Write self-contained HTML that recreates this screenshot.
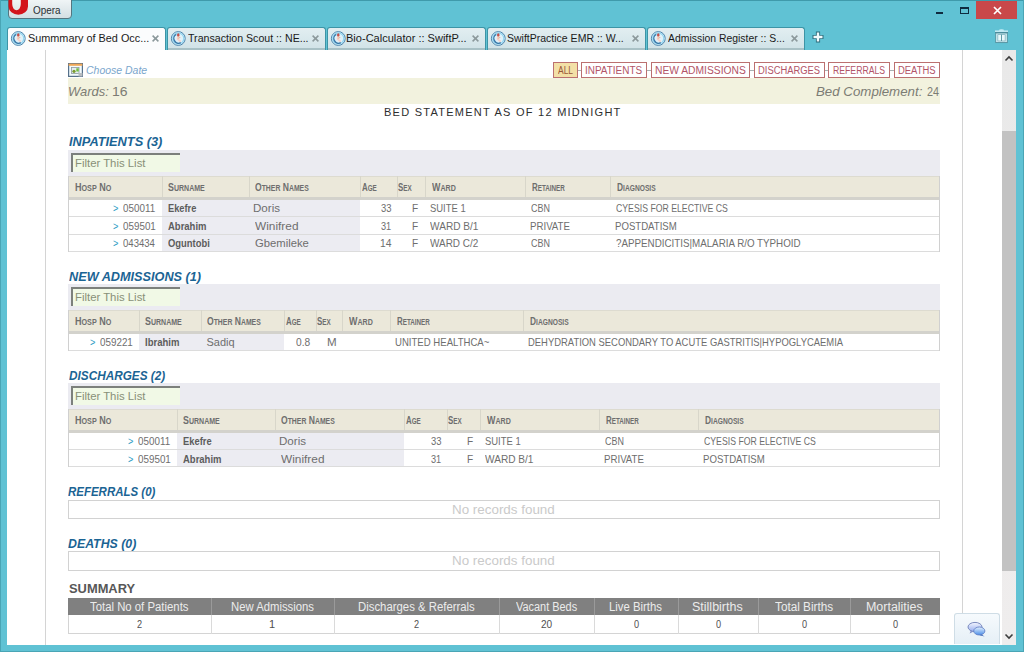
<!DOCTYPE html>
<html><head><meta charset="utf-8"><style>
*{margin:0;padding:0;box-sizing:border-box}
html,body{width:1024px;height:652px;overflow:hidden}
body{background:#60c2d4;font-family:"Liberation Sans",sans-serif;position:relative}
div,span,svg{position:absolute}
.t{white-space:nowrap;line-height:1;transform-origin:0 0}
.tab{top:27px;height:23px;background:linear-gradient(#e2eef1,#d0e2e7);border:1px solid #3d94a6;border-bottom:none;border-radius:3px 3px 0 0}
.tab.active{background:#fbfcfd;height:24px}
.t small{font-size:80%}
.tab .x{right:6px;top:4px;color:#98a6aa;font-size:13px;line-height:1}
</style></head><body>
<div style="left:0px;top:0px;width:1024px;height:1px;background:#3f9aab"></div>
<div style="left:8px;top:-3px;width:64px;height:22px;border:1px solid #55757f;border-radius:0 0 4px 4px;background:linear-gradient(#f3f7f8,#d3dfe3)"></div>
<svg style="left:8px;top:0" width="21" height="16" viewBox="0 0 21 16"><path fill-rule="evenodd" d="M0.6 0V6.5A9.7 8.2 0 0 0 20 6.5V0Z M4.2 0V4A4.3 6.2 0 0 0 12.8 4V0Z" fill="#d3141b"/></svg>
<span class="t" style="left:33.00px;top:5px;font-size:11px;color:#2a2f33;transform:scaleX(0.9032);">Opera</span>
<div style="left:936px;top:12px;width:7px;height:2px;background:#0f2b3f"></div>
<div style="left:960px;top:7px;width:9px;height:7px;border:1px solid #0f2b3f;border-top-width:2px"></div>
<div style="left:976px;top:1px;width:41px;height:18px;background:#c9484a"></div>
<svg style="left:993px;top:6px" width="9" height="9" viewBox="0 0 9 9"><path d="M1 1L8 8M8 1L1 8" stroke="#fff" stroke-width="1.7"/></svg>
<div class="tab active" style="left:7px;width:159px"><svg style="left:2px;top:2px" width="16" height="16" viewBox="0 0 16 16"><circle cx="8.3" cy="8.5" r="6.9" fill="#dff1f9" stroke="#4a84ad" stroke-width="1"/><circle cx="8.3" cy="8.5" r="5.5" fill="none" stroke="#94d6f0" stroke-width="1.3"/><path d="M6.3 4.3A4.3 4.3 0 0 0 10.8 12.6" stroke="#3a78a8" stroke-width="1.4" fill="none"/><path d="M8.2 6L7.6 9L10.6 11.6" stroke="#f6d0c8" stroke-width="1.8" fill="none"/><path d="M7.9 8.6L10.2 7.2" stroke="#f0b898" stroke-width="1.2"/><ellipse cx="8.3" cy="4.9" rx="1.3" ry="1.7" fill="#c25048"/></svg><svg style="right:6px;top:7px" width="7" height="7" viewBox="0 0 7 7"><path d="M0.6 0.6L6.4 6.4M6.4 0.6L0.6 6.4" stroke="#8b989b" stroke-width="1.5"/></svg></div>
<span class="t" style="left:28.10px;top:33px;font-size:11.5px;color:#1a1a1a;transform:scaleX(0.9437);">Summmary of Bed Occ...</span>
<div class="tab" style="left:167px;width:159px"><svg style="left:2px;top:2px" width="16" height="16" viewBox="0 0 16 16"><circle cx="8.3" cy="8.5" r="6.9" fill="#dff1f9" stroke="#4a84ad" stroke-width="1"/><circle cx="8.3" cy="8.5" r="5.5" fill="none" stroke="#94d6f0" stroke-width="1.3"/><path d="M6.3 4.3A4.3 4.3 0 0 0 10.8 12.6" stroke="#3a78a8" stroke-width="1.4" fill="none"/><path d="M8.2 6L7.6 9L10.6 11.6" stroke="#f6d0c8" stroke-width="1.8" fill="none"/><path d="M7.9 8.6L10.2 7.2" stroke="#f0b898" stroke-width="1.2"/><ellipse cx="8.3" cy="4.9" rx="1.3" ry="1.7" fill="#c25048"/></svg><svg style="right:6px;top:7px" width="7" height="7" viewBox="0 0 7 7"><path d="M0.6 0.6L6.4 6.4M6.4 0.6L0.6 6.4" stroke="#8b989b" stroke-width="1.5"/></svg></div>
<div style="left:168px;top:48px;width:157px;height:2px;background:#a9c1c6"></div>
<span class="t" style="left:187.70px;top:33px;font-size:11.5px;color:#1a1a1a;transform:scaleX(0.9231);">Transaction Scout :: NE...</span>
<div class="tab" style="left:327px;width:159px"><svg style="left:2px;top:2px" width="16" height="16" viewBox="0 0 16 16"><circle cx="8.3" cy="8.5" r="6.9" fill="#dff1f9" stroke="#4a84ad" stroke-width="1"/><circle cx="8.3" cy="8.5" r="5.5" fill="none" stroke="#94d6f0" stroke-width="1.3"/><path d="M6.3 4.3A4.3 4.3 0 0 0 10.8 12.6" stroke="#3a78a8" stroke-width="1.4" fill="none"/><path d="M8.2 6L7.6 9L10.6 11.6" stroke="#f6d0c8" stroke-width="1.8" fill="none"/><path d="M7.9 8.6L10.2 7.2" stroke="#f0b898" stroke-width="1.2"/><ellipse cx="8.3" cy="4.9" rx="1.3" ry="1.7" fill="#c25048"/></svg><svg style="right:6px;top:7px" width="7" height="7" viewBox="0 0 7 7"><path d="M0.6 0.6L6.4 6.4M6.4 0.6L0.6 6.4" stroke="#8b989b" stroke-width="1.5"/></svg></div>
<div style="left:328px;top:48px;width:157px;height:2px;background:#a9c1c6"></div>
<span class="t" style="left:346.14px;top:33px;font-size:11.5px;color:#1a1a1a;transform:scaleX(0.9597);">Bio-Calculator :: SwiftP...</span>
<div class="tab" style="left:487px;width:159px"><svg style="left:2px;top:2px" width="16" height="16" viewBox="0 0 16 16"><circle cx="8.3" cy="8.5" r="6.9" fill="#dff1f9" stroke="#4a84ad" stroke-width="1"/><circle cx="8.3" cy="8.5" r="5.5" fill="none" stroke="#94d6f0" stroke-width="1.3"/><path d="M6.3 4.3A4.3 4.3 0 0 0 10.8 12.6" stroke="#3a78a8" stroke-width="1.4" fill="none"/><path d="M8.2 6L7.6 9L10.6 11.6" stroke="#f6d0c8" stroke-width="1.8" fill="none"/><path d="M7.9 8.6L10.2 7.2" stroke="#f0b898" stroke-width="1.2"/><ellipse cx="8.3" cy="4.9" rx="1.3" ry="1.7" fill="#c25048"/></svg><svg style="right:6px;top:7px" width="7" height="7" viewBox="0 0 7 7"><path d="M0.6 0.6L6.4 6.4M6.4 0.6L0.6 6.4" stroke="#8b989b" stroke-width="1.5"/></svg></div>
<div style="left:488px;top:48px;width:157px;height:2px;background:#a9c1c6"></div>
<span class="t" style="left:507.00px;top:33px;font-size:11.5px;color:#1a1a1a;transform:scaleX(0.9134);">SwiftPractice EMR :: W...</span>
<div class="tab" style="left:647px;width:158px"><svg style="left:2px;top:2px" width="16" height="16" viewBox="0 0 16 16"><circle cx="8.3" cy="8.5" r="6.9" fill="#dff1f9" stroke="#4a84ad" stroke-width="1"/><circle cx="8.3" cy="8.5" r="5.5" fill="none" stroke="#94d6f0" stroke-width="1.3"/><path d="M6.3 4.3A4.3 4.3 0 0 0 10.8 12.6" stroke="#3a78a8" stroke-width="1.4" fill="none"/><path d="M8.2 6L7.6 9L10.6 11.6" stroke="#f6d0c8" stroke-width="1.8" fill="none"/><path d="M7.9 8.6L10.2 7.2" stroke="#f0b898" stroke-width="1.2"/><ellipse cx="8.3" cy="4.9" rx="1.3" ry="1.7" fill="#c25048"/></svg><svg style="right:6px;top:7px" width="7" height="7" viewBox="0 0 7 7"><path d="M0.6 0.6L6.4 6.4M6.4 0.6L0.6 6.4" stroke="#8b989b" stroke-width="1.5"/></svg></div>
<div style="left:648px;top:48px;width:156px;height:2px;background:#a9c1c6"></div>
<span class="t" style="left:667.70px;top:33px;font-size:11.5px;color:#1a1a1a;transform:scaleX(0.9054);">Admission Register :: S...</span>
<svg style="left:812px;top:31px" width="12" height="12" viewBox="0 0 12 12"><path d="M6 0.5V11.5M0.5 6H11.5" stroke="#2b6c7c" stroke-width="4.2"/><path d="M6 1.5V10.5M1.5 6H10.5" stroke="#f1fafc" stroke-width="2.4"/></svg>
<svg style="left:994px;top:28px" width="15" height="16" viewBox="0 0 15 16"><ellipse cx="7.5" cy="2.3" rx="2.6" ry="1.1" fill="#c6ecf4"/><rect x="1" y="2.4" width="13" height="2.4" fill="#bfe8f2"/><path d="M1 4.6H14" stroke="#3f8494" stroke-width="1"/><rect x="1.7" y="5" width="11.6" height="9.6" fill="#d6f0f6" stroke="#4f8e9c" stroke-width="0.9"/><rect x="3.8" y="6.6" width="7.4" height="6.4" fill="#e9f8fb" stroke="#7fb2be" stroke-width="0.8"/><path d="M7.5 6.6V13" stroke="#4f8e9c" stroke-width="0.9"/></svg>
<div style="left:7px;top:50px;width:1009px;height:595px;background:#fff"></div>
<div style="left:0px;top:651px;width:1024px;height:1px;background:#4aa5b5"></div>
<div style="left:0px;top:0px;width:1px;height:652px;background:#4aa5b5"></div>
<div style="left:1023px;top:0px;width:1px;height:652px;background:#4aa5b5"></div>
<div style="left:45px;top:50px;width:1px;height:595px;background:#d4d4d4"></div>
<div style="left:962px;top:50px;width:1px;height:563px;background:#d4d4d4"></div>
<div style="left:1002px;top:50px;width:14px;height:595px;background:linear-gradient(#e9e9e9,#efeded)"></div>
<div style="left:1002px;top:131px;width:14px;height:440px;background:#c2c2c2"></div>
<svg style="left:1004px;top:55px" width="10" height="7" viewBox="0 0 10 7"><path d="M1.5 5.5L5 2L8.5 5.5" stroke="#3c3c3c" stroke-width="1.6" fill="none"/></svg>
<svg style="left:1004px;top:633px" width="10" height="7" viewBox="0 0 10 7"><path d="M1.5 1.5L5 5L8.5 1.5" stroke="#3c3c3c" stroke-width="1.6" fill="none"/></svg>
<div style="left:954px;top:613px;width:46px;height:31px;border:1px solid #cfdde6;border-bottom:none;border-radius:3px 3px 0 0;background:linear-gradient(#f6fafd,#e5eff6)"></div>
<svg style="left:967px;top:621px" width="20" height="17" viewBox="0 0 20 17"><defs><linearGradient id="cb1" x1="0" y1="0" x2="0" y2="1"><stop offset="0" stop-color="#f4f6fe"/><stop offset="1" stop-color="#98aef0"/></linearGradient><linearGradient id="cb2" x1="0" y1="0" x2="0" y2="1"><stop offset="0" stop-color="#e6f2fe"/><stop offset="1" stop-color="#4c8ee8"/></linearGradient></defs><ellipse cx="8" cy="6" rx="7" ry="4.6" fill="url(#cb1)" stroke="#6e7fb8" stroke-width="0.9"/><path d="M3.8 9.5L2.6 12.6L6.6 10.4Z" fill="#8090c8"/><ellipse cx="12.3" cy="10" rx="5.6" ry="4" fill="url(#cb2)" stroke="#5a78c0" stroke-width="0.8"/><path d="M14.5 13.4L17.6 15.4L12.6 14.2Z" fill="#3a66b8"/></svg>
<svg style="left:68px;top:63px" width="15" height="14" viewBox="0 0 15 14"><rect x="0.6" y="0.6" width="13.8" height="12.8" fill="#f2fafc" stroke="#56708a" stroke-width="1.2"/><rect x="0.6" y="0.6" width="13.8" height="2.2" fill="#f0a858"/><rect x="3.5" y="4.5" width="7.5" height="6" fill="#e6eef0" stroke="#8a98a0" stroke-width="0.8"/><circle cx="6" cy="8.3" r="1.6" fill="#7a9a30"/><rect x="8.3" y="5.3" width="2.4" height="3.2" fill="#70c040"/><rect x="10.5" y="10" width="4" height="3.5" fill="#b8bcc0"/></svg>
<span class="t" style="left:86.00px;top:65px;font-size:11px;color:#7aa6cc;font-style:italic;transform:scaleX(0.9531);">Choose Date</span>
<div style="left:553px;top:62px;width:25px;height:16px;border:1px solid #bb7070;background:#f3e0a6"></div>
<span class="t" style="left:557.90px;top:66px;font-size:10px;color:#9a5838;transform:scaleX(0.8444);">ALL</span>
<div style="left:581px;top:62px;width:66px;height:16px;border:1px solid #bb7070;background:#fff"></div>
<span class="t" style="left:585.16px;top:66px;font-size:10px;color:#b25468;transform:scaleX(0.9946);">INPATIENTS</span>
<div style="left:578px;top:70px;width:3px;height:1px;background:#a9b2b2"></div>
<div style="left:651px;top:62px;width:99px;height:16px;border:1px solid #bb7070;background:#fff"></div>
<span class="t" style="left:654.77px;top:66px;font-size:10px;color:#b25468;transform:scaleX(1.0276);">NEW ADMISSIONS</span>
<div style="left:647px;top:70px;width:4px;height:1px;background:#a9b2b2"></div>
<div style="left:754px;top:62px;width:71px;height:16px;border:1px solid #bb7070;background:#fff"></div>
<span class="t" style="left:758.06px;top:66px;font-size:10px;color:#b25468;transform:scaleX(0.9385);">DISCHARGES</span>
<div style="left:750px;top:70px;width:4px;height:1px;background:#a9b2b2"></div>
<div style="left:828px;top:62px;width:62px;height:16px;border:1px solid #bb7070;background:#fff"></div>
<span class="t" style="left:832.53px;top:66px;font-size:10px;color:#b25468;transform:scaleX(0.8678);">REFERRALS</span>
<div style="left:825px;top:70px;width:3px;height:1px;background:#a9b2b2"></div>
<div style="left:894px;top:62px;width:46px;height:16px;border:1px solid #bb7070;background:#fff"></div>
<span class="t" style="left:897.66px;top:66px;font-size:10px;color:#b25468;transform:scaleX(0.9436);">DEATHS</span>
<div style="left:890px;top:70px;width:4px;height:1px;background:#a9b2b2"></div>
<div style="left:68px;top:78px;width:872px;height:26px;background:#f2f2de"></div>
<span class="t" style="left:67.91px;top:85px;font-size:13px;color:#7c7c74;font-style:italic;transform:scaleX(0.9950);">Wards:</span>
<span class="t" style="left:112.32px;top:85px;font-size:13px;color:#7c7c74;transform:scaleX(1.0769);">16</span>
<span class="t" style="left:816.00px;top:85px;font-size:13px;color:#7c7c74;font-style:italic;transform:scaleX(1.0221);">Bed Complement:</span>
<span class="t" style="left:926.70px;top:85px;font-size:13px;color:#7c7c74;transform:scaleX(0.8333);">24</span>
<span class="t" style="left:384.34px;top:107px;font-size:11.5px;color:#2e2e2e;transform:scaleX(0.9581);letter-spacing:1.3px">BED STATEMENT AS OF 12 MIDNIGHT</span>
<span class="t" style="left:68.50px;top:135px;font-size:13px;color:#1b6494;font-weight:bold;font-style:italic;transform:scaleX(0.9842);">INPATIENTS (3)</span>
<div style="left:68px;top:150px;width:872px;height:26px;background:#ebebf1"></div>
<div style="left:71px;top:153px;width:109px;height:19px;background:#f1f9e6;border-top:2px solid #7c807c;border-left:2px solid #7c807c"></div>
<span class="t" style="left:74.67px;top:158px;font-size:11px;color:#889078;transform:scaleX(1.0324);">Filter This List</span>
<div style="left:68px;top:176px;width:872px;height:21px;background:#ebe8da;border-top:1px solid #dddbd0"></div>
<div style="left:68px;top:197px;width:872px;height:3px;background:#d3d2cc"></div>
<div style="left:162px;top:200px;width:198px;height:51px;background:#ececf2"></div>
<div style="left:68px;top:216px;width:872px;height:1px;background:#dcdcdc"></div>
<div style="left:68px;top:234px;width:872px;height:1px;background:#dcdcdc"></div>
<div style="left:68px;top:251px;width:872px;height:1px;background:#dcdcdc"></div>
<div style="left:68px;top:176px;width:1px;height:76px;background:#d0d0d0"></div>
<div style="left:939px;top:176px;width:1px;height:76px;background:#d0d0d0"></div>
<div style="left:162px;top:176px;width:1px;height:21px;background:#d8d6ca"></div>
<div style="left:249px;top:176px;width:1px;height:21px;background:#d8d6ca"></div>
<div style="left:360px;top:176px;width:1px;height:21px;background:#d8d6ca"></div>
<div style="left:397px;top:176px;width:1px;height:21px;background:#d8d6ca"></div>
<div style="left:425px;top:176px;width:1px;height:21px;background:#d8d6ca"></div>
<div style="left:525px;top:176px;width:1px;height:21px;background:#d8d6ca"></div>
<div style="left:610px;top:176px;width:1px;height:21px;background:#d8d6ca"></div>
<span class="t" style="left:74.70px;top:182px;font-size:10.5px;color:#6e6e6e;font-weight:bold;transform:scaleX(0.8571);">H<small>OSP</small> N<small>O</small></span>
<span class="t" style="left:168.30px;top:182px;font-size:10.5px;color:#6e6e6e;font-weight:bold;transform:scaleX(0.8409);">S<small>URNAME</small></span>
<span class="t" style="left:255.30px;top:182px;font-size:10.5px;color:#6e6e6e;font-weight:bold;transform:scaleX(0.8182);">O<small>THER</small> N<small>AMES</small></span>
<span class="t" style="left:361.60px;top:182px;font-size:10.5px;color:#6e6e6e;font-weight:bold;transform:scaleX(0.7500);">A<small>GE</small></span>
<span class="t" style="left:398.20px;top:182px;font-size:10.5px;color:#6e6e6e;font-weight:bold;transform:scaleX(0.7500);">S<small>EX</small></span>
<span class="t" style="left:432.00px;top:182px;font-size:10.5px;color:#6e6e6e;font-weight:bold;transform:scaleX(0.8464);">W<small>ARD</small></span>
<span class="t" style="left:532.00px;top:182px;font-size:10.5px;color:#6e6e6e;font-weight:bold;transform:scaleX(0.7500);">R<small>ETAINER</small></span>
<span class="t" style="left:616.80px;top:182px;font-size:10.5px;color:#6e6e6e;font-weight:bold;transform:scaleX(0.7959);">D<small>IAGNOSIS</small></span>
<span class="t" style="left:112.80px;top:203px;font-size:11px;color:#2a9cc4;transform:scaleX(0.8333);">&gt;</span>
<span class="t" style="left:123.00px;top:203px;font-size:11px;color:#6e6e6e;transform:scaleX(0.8944);">050011</span>
<span class="t" style="left:167.60px;top:203px;font-size:11px;color:#5c5c5c;font-weight:bold;transform:scaleX(0.8441);">Ekefre</span>
<span class="t" style="left:253.45px;top:203px;font-size:11px;color:#6e6e6e;transform:scaleX(1.0520);">Doris</span>
<span class="t" style="left:380.70px;top:203px;font-size:11px;color:#6e6e6e;transform:scaleX(0.8583);">33</span>
<span class="t" style="left:411.58px;top:203px;font-size:11px;color:#6e6e6e;transform:scaleX(0.9167);">F</span>
<span class="t" style="left:430.30px;top:203px;font-size:11px;color:#6e6e6e;transform:scaleX(0.8585);">SUITE 1</span>
<span class="t" style="left:530.80px;top:203px;font-size:11px;color:#6e6e6e;transform:scaleX(0.8130);">CBN</span>
<span class="t" style="left:615.80px;top:203px;font-size:11px;color:#6e6e6e;transform:scaleX(0.7922);">CYESIS FOR ELECTIVE CS</span>
<span class="t" style="left:112.80px;top:221px;font-size:11px;color:#2a9cc4;transform:scaleX(0.8333);">&gt;</span>
<span class="t" style="left:123.00px;top:221px;font-size:11px;color:#6e6e6e;transform:scaleX(0.8944);">059501</span>
<span class="t" style="left:167.60px;top:221px;font-size:11px;color:#5c5c5c;font-weight:bold;transform:scaleX(0.8614);">Abrahim</span>
<span class="t" style="left:254.50px;top:221px;font-size:11px;color:#6e6e6e;transform:scaleX(1.0775);">Winifred</span>
<span class="t" style="left:381.00px;top:221px;font-size:11px;color:#6e6e6e;transform:scaleX(0.8333);">31</span>
<span class="t" style="left:411.58px;top:221px;font-size:11px;color:#6e6e6e;transform:scaleX(0.9167);">F</span>
<span class="t" style="left:430.30px;top:221px;font-size:11px;color:#6e6e6e;transform:scaleX(0.9189);">WARD B/1</span>
<span class="t" style="left:529.92px;top:221px;font-size:11px;color:#6e6e6e;transform:scaleX(0.8795);">PRIVATE</span>
<span class="t" style="left:614.93px;top:221px;font-size:11px;color:#6e6e6e;transform:scaleX(0.8739);">POSTDATISM</span>
<span class="t" style="left:112.80px;top:238px;font-size:11px;color:#2a9cc4;transform:scaleX(0.8333);">&gt;</span>
<span class="t" style="left:123.00px;top:238px;font-size:11px;color:#6e6e6e;transform:scaleX(0.8703);">043434</span>
<span class="t" style="left:167.60px;top:238px;font-size:11px;color:#5c5c5c;font-weight:bold;transform:scaleX(0.8542);">Oguntobi</span>
<span class="t" style="left:254.50px;top:238px;font-size:11px;color:#6e6e6e;transform:scaleX(1.0245);">Gbemileke</span>
<span class="t" style="left:379.76px;top:238px;font-size:11px;color:#6e6e6e;transform:scaleX(0.9364);">14</span>
<span class="t" style="left:411.58px;top:238px;font-size:11px;color:#6e6e6e;transform:scaleX(0.9167);">F</span>
<span class="t" style="left:430.30px;top:238px;font-size:11px;color:#6e6e6e;transform:scaleX(0.9057);">WARD C/2</span>
<span class="t" style="left:530.80px;top:238px;font-size:11px;color:#6e6e6e;transform:scaleX(0.8130);">CBN</span>
<span class="t" style="left:615.80px;top:238px;font-size:11px;color:#6e6e6e;transform:scaleX(0.8899);">?APPENDICITIS|MALARIA R/O TYPHOID</span>
<span class="t" style="left:68.50px;top:270px;font-size:13px;color:#1b6494;font-weight:bold;font-style:italic;transform:scaleX(0.9763);">NEW ADMISSIONS (1)</span>
<div style="left:68px;top:284px;width:872px;height:26px;background:#ebebf1"></div>
<div style="left:71px;top:287px;width:109px;height:19px;background:#f1f9e6;border-top:2px solid #7c807c;border-left:2px solid #7c807c"></div>
<span class="t" style="left:74.67px;top:292px;font-size:11px;color:#889078;transform:scaleX(1.0324);">Filter This List</span>
<div style="left:68px;top:310px;width:872px;height:21px;background:#ebe8da;border-top:1px solid #dddbd0"></div>
<div style="left:68px;top:331px;width:872px;height:3px;background:#d3d2cc"></div>
<div style="left:139px;top:334px;width:145px;height:16px;background:#ececf2"></div>
<div style="left:68px;top:350px;width:872px;height:1px;background:#dcdcdc"></div>
<div style="left:68px;top:310px;width:1px;height:41px;background:#d0d0d0"></div>
<div style="left:939px;top:310px;width:1px;height:41px;background:#d0d0d0"></div>
<div style="left:139px;top:310px;width:1px;height:21px;background:#d8d6ca"></div>
<div style="left:201px;top:310px;width:1px;height:21px;background:#d8d6ca"></div>
<div style="left:284px;top:310px;width:1px;height:21px;background:#d8d6ca"></div>
<div style="left:316px;top:310px;width:1px;height:21px;background:#d8d6ca"></div>
<div style="left:342px;top:310px;width:1px;height:21px;background:#d8d6ca"></div>
<div style="left:390px;top:310px;width:1px;height:21px;background:#d8d6ca"></div>
<div style="left:523px;top:310px;width:1px;height:21px;background:#d8d6ca"></div>
<span class="t" style="left:74.70px;top:316px;font-size:10.5px;color:#6e6e6e;font-weight:bold;transform:scaleX(0.8571);">H<small>OSP</small> N<small>O</small></span>
<span class="t" style="left:145.30px;top:316px;font-size:10.5px;color:#6e6e6e;font-weight:bold;transform:scaleX(0.8409);">S<small>URNAME</small></span>
<span class="t" style="left:207.30px;top:316px;font-size:10.5px;color:#6e6e6e;font-weight:bold;transform:scaleX(0.8182);">O<small>THER</small> N<small>AMES</small></span>
<span class="t" style="left:285.60px;top:316px;font-size:10.5px;color:#6e6e6e;font-weight:bold;transform:scaleX(0.7500);">A<small>GE</small></span>
<span class="t" style="left:317.20px;top:316px;font-size:10.5px;color:#6e6e6e;font-weight:bold;transform:scaleX(0.7500);">S<small>EX</small></span>
<span class="t" style="left:349.00px;top:316px;font-size:10.5px;color:#6e6e6e;font-weight:bold;transform:scaleX(0.8464);">W<small>ARD</small></span>
<span class="t" style="left:397.00px;top:316px;font-size:10.5px;color:#6e6e6e;font-weight:bold;transform:scaleX(0.7500);">R<small>ETAINER</small></span>
<span class="t" style="left:529.80px;top:316px;font-size:10.5px;color:#6e6e6e;font-weight:bold;transform:scaleX(0.7959);">D<small>IAGNOSIS</small></span>
<span class="t" style="left:89.80px;top:337px;font-size:11px;color:#2a9cc4;transform:scaleX(0.8333);">&gt;</span>
<span class="t" style="left:100.00px;top:337px;font-size:11px;color:#6e6e6e;transform:scaleX(0.8944);">059221</span>
<span class="t" style="left:144.60px;top:337px;font-size:11px;color:#5c5c5c;font-weight:bold;transform:scaleX(0.8650);">Ibrahim</span>
<span class="t" style="left:206.50px;top:337px;font-size:11px;color:#6e6e6e;">Sadiq</span>
<span class="t" style="left:296.10px;top:337px;font-size:11px;color:#6e6e6e;transform:scaleX(0.9267);">0.8</span>
<span class="t" style="left:327.25px;top:337px;font-size:11px;color:#6e6e6e;transform:scaleX(1.0500);">M</span>
<span class="t" style="left:394.93px;top:337px;font-size:11px;color:#6e6e6e;transform:scaleX(0.8710);">UNITED HEALTHCA~</span>
<span class="t" style="left:527.94px;top:337px;font-size:11px;color:#6e6e6e;transform:scaleX(0.8567);">DEHYDRATION SECONDARY TO ACUTE GASTRITIS|HYPOGLYCAEMIA</span>
<span class="t" style="left:68.50px;top:369px;font-size:13px;color:#1b6494;font-weight:bold;font-style:italic;transform:scaleX(0.9057);">DISCHARGES (2)</span>
<div style="left:68px;top:383px;width:872px;height:26px;background:#ebebf1"></div>
<div style="left:71px;top:386px;width:109px;height:19px;background:#f1f9e6;border-top:2px solid #7c807c;border-left:2px solid #7c807c"></div>
<span class="t" style="left:74.67px;top:391px;font-size:11px;color:#889078;transform:scaleX(1.0324);">Filter This List</span>
<div style="left:68px;top:409px;width:872px;height:21px;background:#ebe8da;border-top:1px solid #dddbd0"></div>
<div style="left:68px;top:430px;width:872px;height:3px;background:#d3d2cc"></div>
<div style="left:177px;top:433px;width:227px;height:33px;background:#ececf2"></div>
<div style="left:68px;top:449px;width:872px;height:1px;background:#dcdcdc"></div>
<div style="left:68px;top:466px;width:872px;height:1px;background:#dcdcdc"></div>
<div style="left:68px;top:409px;width:1px;height:58px;background:#d0d0d0"></div>
<div style="left:939px;top:409px;width:1px;height:58px;background:#d0d0d0"></div>
<div style="left:177px;top:409px;width:1px;height:21px;background:#d8d6ca"></div>
<div style="left:275px;top:409px;width:1px;height:21px;background:#d8d6ca"></div>
<div style="left:404px;top:409px;width:1px;height:21px;background:#d8d6ca"></div>
<div style="left:447px;top:409px;width:1px;height:21px;background:#d8d6ca"></div>
<div style="left:480px;top:409px;width:1px;height:21px;background:#d8d6ca"></div>
<div style="left:599px;top:409px;width:1px;height:21px;background:#d8d6ca"></div>
<div style="left:698px;top:409px;width:1px;height:21px;background:#d8d6ca"></div>
<span class="t" style="left:74.70px;top:415px;font-size:10.5px;color:#6e6e6e;font-weight:bold;transform:scaleX(0.8571);">H<small>OSP</small> N<small>O</small></span>
<span class="t" style="left:183.30px;top:415px;font-size:10.5px;color:#6e6e6e;font-weight:bold;transform:scaleX(0.8409);">S<small>URNAME</small></span>
<span class="t" style="left:281.30px;top:415px;font-size:10.5px;color:#6e6e6e;font-weight:bold;transform:scaleX(0.8182);">O<small>THER</small> N<small>AMES</small></span>
<span class="t" style="left:405.60px;top:415px;font-size:10.5px;color:#6e6e6e;font-weight:bold;transform:scaleX(0.7500);">A<small>GE</small></span>
<span class="t" style="left:448.20px;top:415px;font-size:10.5px;color:#6e6e6e;font-weight:bold;transform:scaleX(0.7500);">S<small>EX</small></span>
<span class="t" style="left:487.00px;top:415px;font-size:10.5px;color:#6e6e6e;font-weight:bold;transform:scaleX(0.8464);">W<small>ARD</small></span>
<span class="t" style="left:606.00px;top:415px;font-size:10.5px;color:#6e6e6e;font-weight:bold;transform:scaleX(0.7500);">R<small>ETAINER</small></span>
<span class="t" style="left:704.80px;top:415px;font-size:10.5px;color:#6e6e6e;font-weight:bold;transform:scaleX(0.7959);">D<small>IAGNOSIS</small></span>
<span class="t" style="left:127.80px;top:436px;font-size:11px;color:#2a9cc4;transform:scaleX(0.8333);">&gt;</span>
<span class="t" style="left:138.00px;top:436px;font-size:11px;color:#6e6e6e;transform:scaleX(0.8944);">050011</span>
<span class="t" style="left:182.60px;top:436px;font-size:11px;color:#5c5c5c;font-weight:bold;transform:scaleX(0.8500);">Ekefre</span>
<span class="t" style="left:279.45px;top:436px;font-size:11px;color:#6e6e6e;transform:scaleX(1.0520);">Doris</span>
<span class="t" style="left:430.70px;top:436px;font-size:11px;color:#6e6e6e;transform:scaleX(0.8583);">33</span>
<span class="t" style="left:466.58px;top:436px;font-size:11px;color:#6e6e6e;transform:scaleX(0.9167);">F</span>
<span class="t" style="left:485.30px;top:436px;font-size:11px;color:#6e6e6e;transform:scaleX(0.8585);">SUITE 1</span>
<span class="t" style="left:604.80px;top:436px;font-size:11px;color:#6e6e6e;transform:scaleX(0.8130);">CBN</span>
<span class="t" style="left:703.80px;top:436px;font-size:11px;color:#6e6e6e;transform:scaleX(0.7922);">CYESIS FOR ELECTIVE CS</span>
<span class="t" style="left:127.80px;top:454px;font-size:11px;color:#2a9cc4;transform:scaleX(0.8333);">&gt;</span>
<span class="t" style="left:138.00px;top:454px;font-size:11px;color:#6e6e6e;transform:scaleX(0.8944);">059501</span>
<span class="t" style="left:182.60px;top:454px;font-size:11px;color:#5c5c5c;font-weight:bold;transform:scaleX(0.8614);">Abrahim</span>
<span class="t" style="left:280.50px;top:454px;font-size:11px;color:#6e6e6e;transform:scaleX(1.0775);">Winifred</span>
<span class="t" style="left:431.00px;top:454px;font-size:11px;color:#6e6e6e;transform:scaleX(0.8333);">31</span>
<span class="t" style="left:466.58px;top:454px;font-size:11px;color:#6e6e6e;transform:scaleX(0.9167);">F</span>
<span class="t" style="left:485.30px;top:454px;font-size:11px;color:#6e6e6e;transform:scaleX(0.9189);">WARD B/1</span>
<span class="t" style="left:603.92px;top:454px;font-size:11px;color:#6e6e6e;transform:scaleX(0.8795);">PRIVATE</span>
<span class="t" style="left:702.93px;top:454px;font-size:11px;color:#6e6e6e;transform:scaleX(0.8739);">POSTDATISM</span>
<span class="t" style="left:68.40px;top:485px;font-size:13px;color:#1b6494;font-weight:bold;font-style:italic;transform:scaleX(0.8828);">REFERRALS (0)</span>
<div style="left:68px;top:500px;width:872px;height:19px;border:1px solid #d2d2d2"></div>
<span class="t" style="left:452.27px;top:503px;font-size:13px;color:#cacaca;transform:scaleX(1.0306);">No records found</span>
<span class="t" style="left:68.40px;top:537px;font-size:13px;color:#1b6494;font-weight:bold;font-style:italic;transform:scaleX(0.9486);">DEATHS (0)</span>
<div style="left:68px;top:551px;width:872px;height:20px;border:1px solid #d2d2d2"></div>
<span class="t" style="left:452.27px;top:554px;font-size:13px;color:#cacaca;transform:scaleX(1.0306);">No records found</span>
<span class="t" style="left:68.50px;top:582px;font-size:13px;color:#575757;font-weight:bold;transform:scaleX(0.9910);">SUMMARY</span>
<div style="left:68px;top:598px;width:872px;height:17px;background:#808080"></div>
<div style="left:68px;top:615px;width:872px;height:19px;border:1px solid #d4d4d4;border-top:none"></div>
<span class="t" style="left:90.30px;top:601px;font-size:12px;color:#ececec;transform:scaleX(0.9462);">Total No of Patients</span>
<span class="t" style="left:137.00px;top:619px;font-size:11px;color:#505050;transform:scaleX(0.8333);">2</span>
<span class="t" style="left:230.56px;top:601px;font-size:12px;color:#ececec;transform:scaleX(0.9425);">New Admissions</span>
<span class="t" style="left:269.00px;top:619px;font-size:11px;color:#505050;">1</span>
<div style="left:211px;top:598px;width:1px;height:17px;background:#9a9a9a"></div>
<div style="left:211px;top:615px;width:1px;height:19px;background:#dadada"></div>
<span class="t" style="left:357.80px;top:601px;font-size:12px;color:#ececec;transform:scaleX(0.9467);">Discharges &amp; Referrals</span>
<span class="t" style="left:414.00px;top:619px;font-size:11px;color:#505050;transform:scaleX(0.8333);">2</span>
<div style="left:334px;top:598px;width:1px;height:17px;background:#9a9a9a"></div>
<div style="left:334px;top:615px;width:1px;height:19px;background:#dadada"></div>
<span class="t" style="left:516.00px;top:601px;font-size:12px;color:#ececec;transform:scaleX(0.9104);">Vacant Beds</span>
<span class="t" style="left:541.00px;top:619px;font-size:11px;color:#505050;transform:scaleX(0.9167);">20</span>
<div style="left:499px;top:598px;width:1px;height:17px;background:#9a9a9a"></div>
<div style="left:499px;top:615px;width:1px;height:19px;background:#dadada"></div>
<span class="t" style="left:609.05px;top:601px;font-size:12px;color:#ececec;transform:scaleX(0.9455);">Live Births</span>
<span class="t" style="left:633.50px;top:619px;font-size:11px;color:#505050;transform:scaleX(0.8333);">0</span>
<div style="left:594px;top:598px;width:1px;height:17px;background:#9a9a9a"></div>
<div style="left:594px;top:615px;width:1px;height:19px;background:#dadada"></div>
<span class="t" style="left:691.96px;top:601px;font-size:12px;color:#ececec;transform:scaleX(1.0417);">Stillbirths</span>
<span class="t" style="left:715.50px;top:619px;font-size:11px;color:#505050;transform:scaleX(0.8333);">0</span>
<div style="left:678px;top:598px;width:1px;height:17px;background:#9a9a9a"></div>
<div style="left:678px;top:615px;width:1px;height:19px;background:#dadada"></div>
<span class="t" style="left:775.10px;top:601px;font-size:12px;color:#ececec;transform:scaleX(0.9797);">Total Births</span>
<span class="t" style="left:801.50px;top:619px;font-size:11px;color:#505050;transform:scaleX(0.8333);">0</span>
<div style="left:758px;top:598px;width:1px;height:17px;background:#9a9a9a"></div>
<div style="left:758px;top:615px;width:1px;height:19px;background:#dadada"></div>
<span class="t" style="left:865.96px;top:601px;font-size:12px;color:#ececec;transform:scaleX(1.0370);">Mortalities</span>
<span class="t" style="left:892.50px;top:619px;font-size:11px;color:#505050;transform:scaleX(0.8333);">0</span>
<div style="left:850px;top:598px;width:1px;height:17px;background:#9a9a9a"></div>
<div style="left:850px;top:615px;width:1px;height:19px;background:#dadada"></div>
</body></html>
